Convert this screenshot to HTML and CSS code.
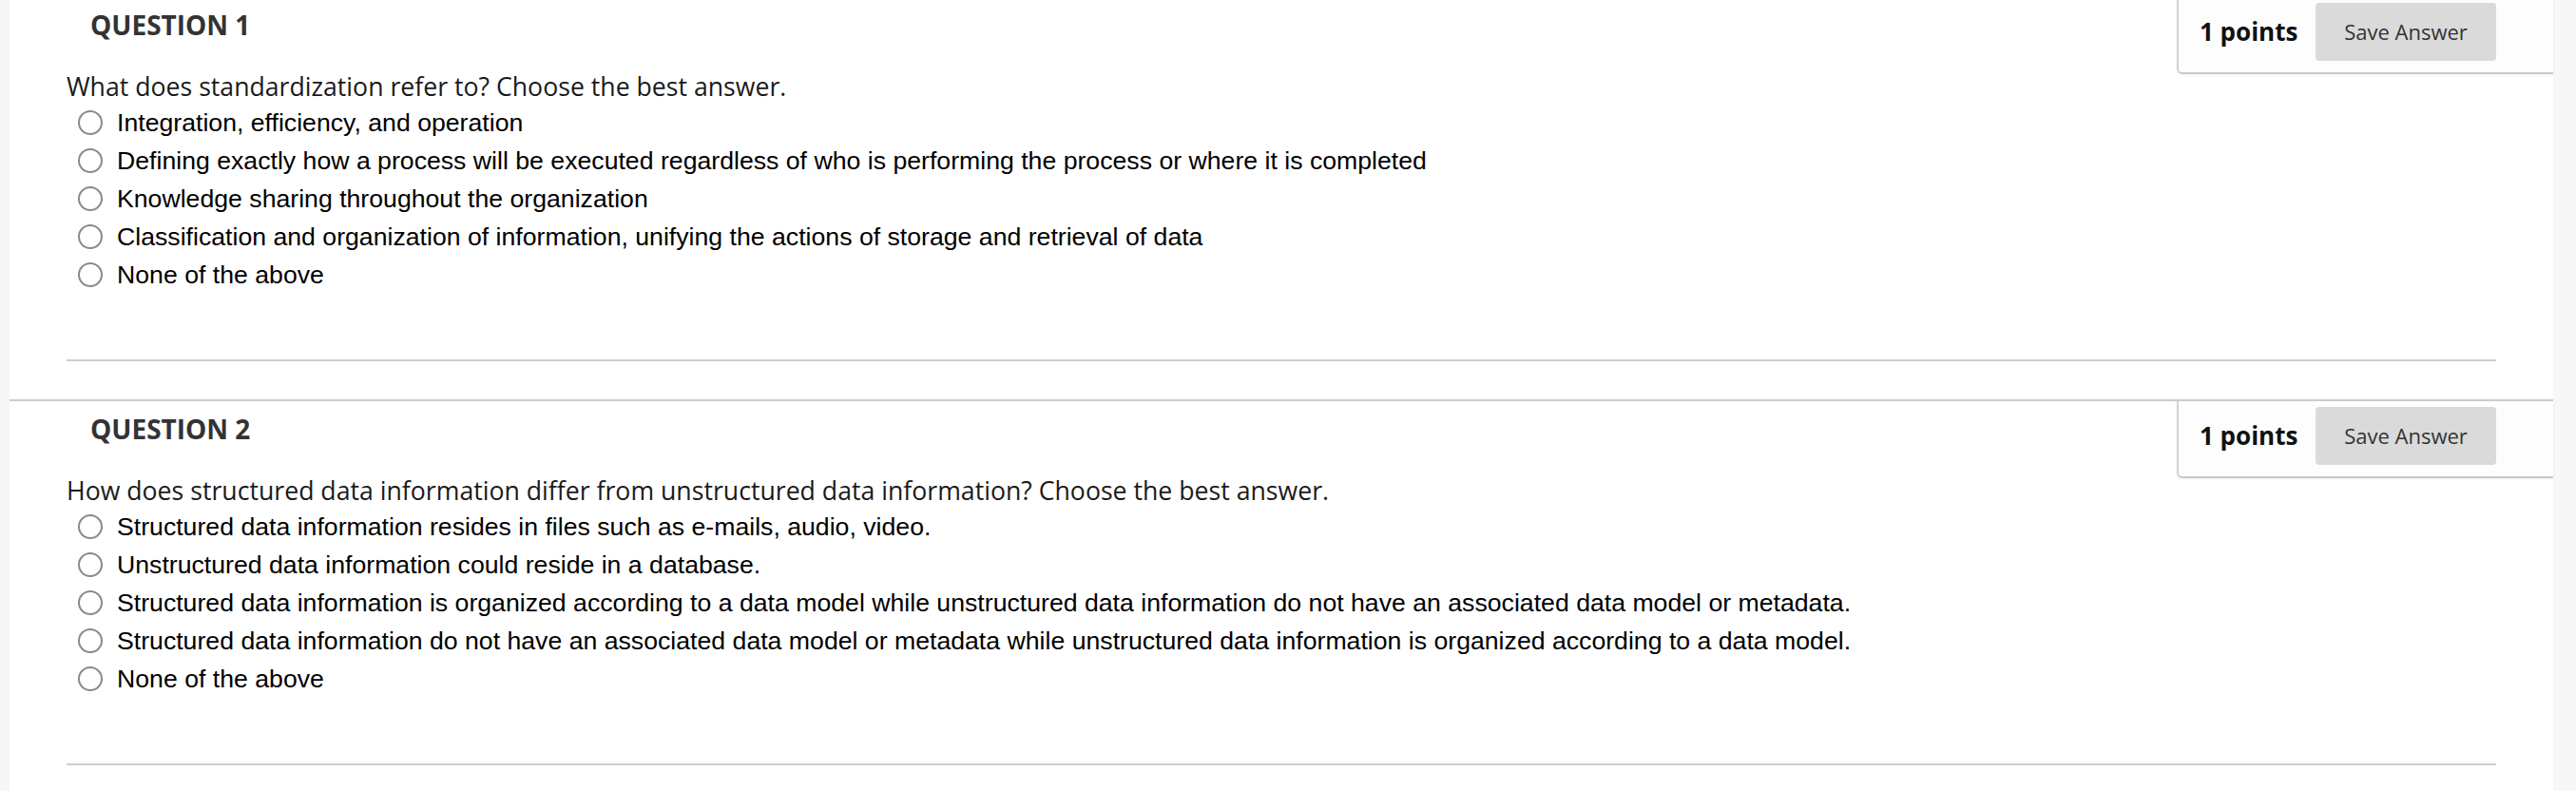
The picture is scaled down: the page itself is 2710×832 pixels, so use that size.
FILE: index.html
```
<!DOCTYPE html>
<html>
<head>
<meta charset="utf-8">
<link rel="stylesheet" href="styles.css">
</head>
<body>
<div class="page">
  <section class="question">
    <div class="q-head">
      <h2 class="q-title">QUESTION 1</h2>
      <div class="q-points">
        <span class="points">1 points</span>
        <button class="save">Save Answer</button>
      </div>
    </div>
    <p class="q-text">What does standardization refer to? Choose the best answer.</p>
    <ul class="options">
      <li class="option"><span class="radio"></span><span class="label">Integration, efficiency, and operation</span></li>
      <li class="option"><span class="radio"></span><span class="label">Defining exactly how a process will be executed regardless of who is performing the process or where it is completed</span></li>
      <li class="option"><span class="radio"></span><span class="label">Knowledge sharing throughout the organization</span></li>
      <li class="option"><span class="radio"></span><span class="label">Classification and organization of information, unifying the actions of storage and retrieval of data</span></li>
      <li class="option"><span class="radio"></span><span class="label">None of the above</span></li>
    </ul>
    <hr class="divider">
  </section>
  <section class="question">
    <div class="q-head">
      <h2 class="q-title">QUESTION 2</h2>
      <div class="q-points">
        <span class="points">1 points</span>
        <button class="save">Save Answer</button>
      </div>
    </div>
    <p class="q-text">How does structured data information differ from unstructured data information? Choose the best answer.</p>
    <ul class="options">
      <li class="option"><span class="radio"></span><span class="label">Structured data information resides in files such as e-mails, audio, video.</span></li>
      <li class="option"><span class="radio"></span><span class="label">Unstructured data information could reside in a database.</span></li>
      <li class="option"><span class="radio"></span><span class="label">Structured data information is organized according to a data model while unstructured data information do not have an associated data model or metadata.</span></li>
      <li class="option"><span class="radio"></span><span class="label">Structured data information do not have an associated data model or metadata while unstructured data information is organized according to a data model.</span></li>
      <li class="option"><span class="radio"></span><span class="label">None of the above</span></li>
    </ul>
    <hr class="divider">
  </section>
</div>
</body>
</html>
```
FILE: styles.css
```
html, body {
  margin: 0;
  padding: 0;
}
body {
  background: #f7f7f7;
  overflow: hidden;
  height: 832px;
}
.page {
  margin: -3px 24px 0 10px;
  background: #ffffff;
  min-height: 900px;
}
.question {
  height: 423px;
  border-bottom: 2px solid #cdcdcd;
  box-sizing: content-box;
}
.q-head {
  display: flex;
  justify-content: space-between;
  align-items: flex-start;
}
.q-title {
  margin: 0;
  padding: 10px 0 0 85px;
  font-family: "Open Sans", sans-serif;
  font-weight: 700;
  font-size: 28px;
  line-height: 38px;
  color: #333333;
}
.q-points {
  width: 396px;
  box-sizing: border-box;
  height: 81px;
  display: flex;
  align-items: center;
  padding: 6px 60px 13px 22px;
  border-left: 2px solid #d2d2d2;
  border-bottom: 2px solid #c9c9c9;
  border-bottom-left-radius: 6px;
  box-shadow: 0 1px 3px rgba(0, 0, 0, 0.06);
  background: #fdfdfd;
}
.points {
  font-family: "Open Sans", sans-serif;
  font-weight: 700;
  font-size: 26px;
  color: #111111;
  white-space: nowrap;
}
.save {
  margin-left: auto;
  width: 190px;
  height: 61px;
  border: none;
  border-radius: 4px;
  background: #dadada;
  font-family: "Open Sans", sans-serif;
  font-size: 22px;
  color: #333333;
  padding: 0;
}
.q-text {
  margin: -1px 0 0 0;
  padding-left: 60px;
  font-family: "Open Sans", sans-serif;
  font-size: 26.67px;
  line-height: 28px;
  color: #1a1a1a;
}
.options {
  list-style: none;
  margin: 4px 0 0 0;
  padding: 0 0 0 72px;
}
.option {
  display: flex;
  align-items: center;
  height: 40px;
  gap: 15px;
}
.radio {
  width: 26px;
  height: 26px;
  box-sizing: border-box;
  border: 2px solid #8a8a8a;
  border-radius: 50%;
  flex: none;
}
.label {
  font-family: "Liberation Sans", Arial, sans-serif;
  font-size: 26.67px;
  line-height: 40px;
  color: #000000;
  white-space: nowrap;
}
.divider {
  margin: 69px 60px 0 60px;
  border: none;
  border-top: 2px solid #cdcdcd;
  height: 0;
}
```
